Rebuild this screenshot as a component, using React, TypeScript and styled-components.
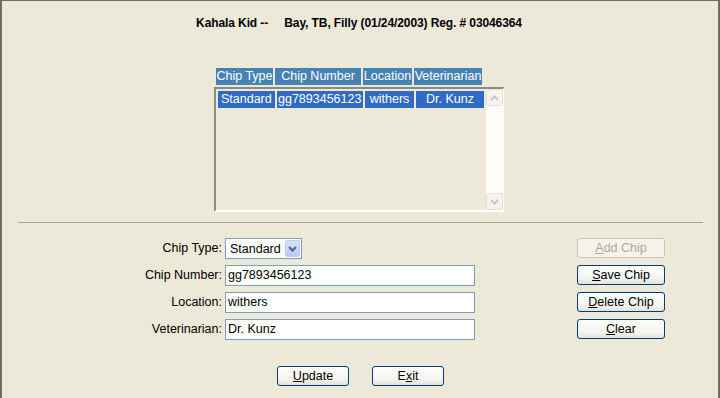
import React from "react";
import styled, { createGlobalStyle } from "styled-components";

const GlobalStyle = createGlobalStyle`
  html, body {
    margin: 0;
    padding: 0;
    background: #ece9d8;
  }
  * { box-sizing: border-box; }
`;

const Frame = styled.div`
  width: 720px;
  height: 398px;
  background: #ece9d8;
  border-top: 1px solid #6f6e62;
  border-left: 2px solid #6f6e62;
  border-right: 2px solid #6f6e62;
  padding-top: 15px;
  font-family: "Liberation Sans", Arial, sans-serif;
  font-size: 12.5px;
  color: #000;
  display: flex;
  flex-direction: column;
`;

const Title = styled.div`
  height: 14px;
  line-height: 14px;
  text-align: center;
  font-weight: bold;
  font-size: 12px;
  white-space: pre;
  letter-spacing: -0.1px;
  padding-right: 2px;
`;

const TableArea = styled.div`
  margin-top: 38px;
  margin-left: 212px;
  display: flex;
  flex-direction: column;
  width: 290px;
`;

const HeaderRow = styled.div`
  display: flex;
  gap: 2px;
  margin-left: 2px;
  height: 17px;
`;

const HeaderCell = styled.div<{ $w: number }>`
  width: ${(p) => p.$w}px;
  background: #4682b4;
  color: #fff;
  line-height: 17px;
  text-align: center;
  white-space: nowrap;
  overflow: hidden;
`;

const ListBox = styled.div`
  margin-top: 2px;
  height: 125px;
  border-top: 2px solid #8d8b7f;
  border-left: 2px solid #8d8b7f;
  border-right: 1px solid #fff;
  border-bottom: 2px solid #fff;
  display: flex;
`;

const ListBody = styled.div`
  flex: 1;
  padding: 2px;
`;

const DataRow = styled.div`
  display: flex;
  gap: 2px;
  height: 17px;
`;

const DataCell = styled.div<{ $w: number; $center?: boolean; $tight?: boolean }>`
  width: ${(p) => p.$w}px;
  background: #316ac5;
  color: #fff;
  line-height: 17px;
  padding: 0 ${(p) => (p.$tight ? 1 : 3)}px;
  text-align: ${(p) => (p.$center ? "center" : "left")};
  white-space: nowrap;
  overflow: hidden;
`;

const ScrollBar = styled.div`
  width: 17px;
  background: #fdfdfb;
  display: flex;
  flex-direction: column;
  justify-content: space-between;
`;

const ScrollButton = styled.div`
  height: 17px;
  background: #f4f3ee;
  border: 1px solid #e4e2d8;
  border-radius: 2px;
  display: flex;
  align-items: center;
  justify-content: center;
`;

const Separator = styled.div`
  margin-top: 10px;
  margin-left: 16px;
  width: 685px;
  height: 1px;
  background: #a5a498;
`;

const FormGrid = styled.div`
  margin-top: 15px;
  display: grid;
  grid-template-columns: 220px 250px 88px;
  column-gap: 3px;
  row-gap: 6px;
  grid-auto-rows: 21px;
`;

const Label = styled.div`
  text-align: right;
  line-height: 21px;
  white-space: nowrap;
`;

const TextField = styled.div`
  border: 1px solid #7f9db9;
  background: #fff;
  height: 21px;
  line-height: 19px;
  padding-left: 2px;
`;

const Combo = styled.div`
  width: 77px;
  height: 21px;
  border: 1px solid #7f9db9;
  background: #fff;
  display: flex;
  align-items: center;
  justify-content: space-between;
  padding: 0 1px 0 4px;
`;

const ComboButton = styled.div`
  width: 15px;
  height: 17px;
  border-radius: 2px;
  background: linear-gradient(#d6e2fc, #b7cbf7);
  border: 1px solid #bccdf5;
  display: flex;
  align-items: center;
  justify-content: center;
`;

const SideButtonCell = styled.div`
  grid-column: 3;
  margin-left: 99px;
  width: 88px;
  align-self: start;
`;

const Button = styled.div<{ $w?: number; $disabled?: boolean }>`
  width: ${(p) => p.$w ?? 88}px;
  height: 20px;
  border: 1px solid ${(p) => (p.$disabled ? "#c9c7ba" : "#003c74")};
  border-radius: 3px;
  background: ${(p) =>
    p.$disabled ? "#f5f4ea" : "linear-gradient(#ffffff, #f3f3ef 70%, #e3e2da)"};
  color: ${(p) => (p.$disabled ? "#aca899" : "#000")};
  text-align: center;
  line-height: 18px;
  font-size: 12.5px;
  u { text-decoration: underline; }
`;

const BottomBar = styled.div`
  margin-top: 26px;
  display: flex;
  justify-content: center;
  gap: 23px;
  padding-left: 1px;
`;

const Chevron = ({ up, color }: { up?: boolean; color: string }) => (
  <svg width="9" height="6" viewBox="0 0 9 6">
    <path
      d={up ? "M1 5 L4.5 1.5 L8 5" : "M1 1 L4.5 4.5 L8 1"}
      fill="none"
      stroke={color}
      strokeWidth="2"
    />
  </svg>
);

const widths = [57, 86, 49, 68];

export default function App() {
  return (
    <>
      <GlobalStyle />
      <Frame>
        <Title>{"Kahala Kid --     Bay, TB, Filly (01/24/2003) Reg. # 03046364"}</Title>
        <TableArea>
          <HeaderRow>
            {["Chip Type", "Chip Number", "Location", "Veterinarian"].map((h, i) => (
              <HeaderCell key={h} $w={widths[i]}>
                {h}
              </HeaderCell>
            ))}
          </HeaderRow>
          <ListBox>
            <ListBody>
              <DataRow>
                <DataCell $w={widths[0]}>Standard</DataCell>
                <DataCell $w={widths[1]} $tight>
                  gg7893456123
                </DataCell>
                <DataCell $w={widths[2]} $center>
                  withers
                </DataCell>
                <DataCell $w={widths[3]} $center>
                  Dr. Kunz
                </DataCell>
              </DataRow>
            </ListBody>
            <ScrollBar>
              <ScrollButton>
                <Chevron up color="#c9c7bb" />
              </ScrollButton>
              <ScrollButton>
                <Chevron color="#c9c7bb" />
              </ScrollButton>
            </ScrollBar>
          </ListBox>
        </TableArea>
        <Separator />
        <FormGrid>
          <Label>Chip Type:</Label>
          <div>
            <Combo>
              <span>Standard</span>
              <ComboButton>
                <Chevron color="#4d6185" />
              </ComboButton>
            </Combo>
          </div>
          <SideButtonCell>
            <Button $disabled>
              <u>A</u>dd Chip
            </Button>
          </SideButtonCell>

          <Label>Chip Number:</Label>
          <TextField>gg7893456123</TextField>
          <SideButtonCell>
            <Button>
              <u>S</u>ave Chip
            </Button>
          </SideButtonCell>

          <Label>Location:</Label>
          <TextField>withers</TextField>
          <SideButtonCell>
            <Button>
              <u>D</u>elete Chip
            </Button>
          </SideButtonCell>

          <Label>Veterinarian:</Label>
          <TextField>Dr. Kunz</TextField>
          <SideButtonCell>
            <Button>
              <u>C</u>lear
            </Button>
          </SideButtonCell>
        </FormGrid>
        <BottomBar>
          <Button $w={72}>
            <u>U</u>pdate
          </Button>
          <Button $w={72}>
            E<u>x</u>it
          </Button>
        </BottomBar>
      </Frame>
    </>
  );
}
